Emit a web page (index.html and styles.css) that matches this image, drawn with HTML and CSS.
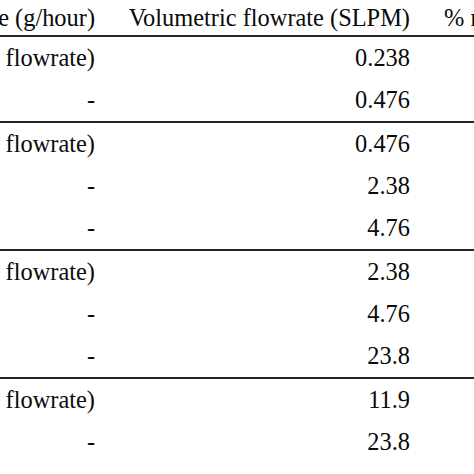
FILE: index.html
```html
<!DOCTYPE html>
<html lang="en">
<head>
<meta charset="utf-8">
<title>Flowrate table</title>
<link rel="stylesheet" href="styles.css">
</head>
<body>
<div class="viewport">
  <div class="table">
    <div class="row head">
      <div class="cell c1">Mass flowrate (g/hour)</div>
      <div class="cell c2">Volumetric flowrate (SLPM)</div>
      <div class="cell c3">% reduction</div>
    </div>

    <div class="group">
      <div class="row">
        <div class="cell c1">0.3 (min. flowrate)</div>
        <div class="cell c2">0.238</div>
        <div class="cell c3 val">100</div>
      </div>
      <div class="row">
        <div class="cell c1">-</div>
        <div class="cell c2">0.476</div>
        <div class="cell c3 val">50</div>
      </div>
    </div>

    <div class="group">
      <div class="row">
        <div class="cell c1">0.6 (min. flowrate)</div>
        <div class="cell c2">0.476</div>
        <div class="cell c3 val">100</div>
      </div>
      <div class="row">
        <div class="cell c1">-</div>
        <div class="cell c2">2.38</div>
        <div class="cell c3 val">20</div>
      </div>
      <div class="row">
        <div class="cell c1">-</div>
        <div class="cell c2">4.76</div>
        <div class="cell c3 val">10</div>
      </div>
    </div>

    <div class="group">
      <div class="row">
        <div class="cell c1">3.0 (min. flowrate)</div>
        <div class="cell c2">2.38</div>
        <div class="cell c3 val">100</div>
      </div>
      <div class="row">
        <div class="cell c1">-</div>
        <div class="cell c2">4.76</div>
        <div class="cell c3 val">50</div>
      </div>
      <div class="row">
        <div class="cell c1">-</div>
        <div class="cell c2">23.8</div>
        <div class="cell c3 val">10</div>
      </div>
    </div>

    <div class="group">
      <div class="row">
        <div class="cell c1">15 (min. flowrate)</div>
        <div class="cell c2">11.9</div>
        <div class="cell c3 val">100</div>
      </div>
      <div class="row">
        <div class="cell c1">-</div>
        <div class="cell c2">23.8</div>
        <div class="cell c3 val">50</div>
      </div>
    </div>
  </div>
</div>
</body>
</html>
```

FILE: styles.css
```css
html, body {
  margin: 0;
  padding: 0;
  background: #ffffff;
}

body {
  width: 474px;
  height: 474px;
  overflow: hidden;
}

.viewport {
  width: 474px;
  height: 474px;
  overflow: hidden;
}

.table {
  margin-left: -205px;
  width: 820px;
  font-family: "Liberation Serif", "Times New Roman", serif;
  font-size: 24.4px;
  color: #0a0a0a;
}

.row {
  display: grid;
  grid-template-columns: 300px 315px 205px;
  height: 42px;
  line-height: 42px;
}

.row.head {
  height: 35px;
  line-height: 35px;
  border-bottom: 2px solid #262626;
}

.group + .group {
  border-top: 2px solid #262626;
}

.cell {
  white-space: nowrap;
  overflow: visible;
}

.c1 {
  text-align: right;
}

.c2 {
  text-align: right;
}

.c3 {
  padding-left: 34px;
  text-align: left;
}

.c3.val {
  padding-left: 0;
  text-align: right;
}
```
